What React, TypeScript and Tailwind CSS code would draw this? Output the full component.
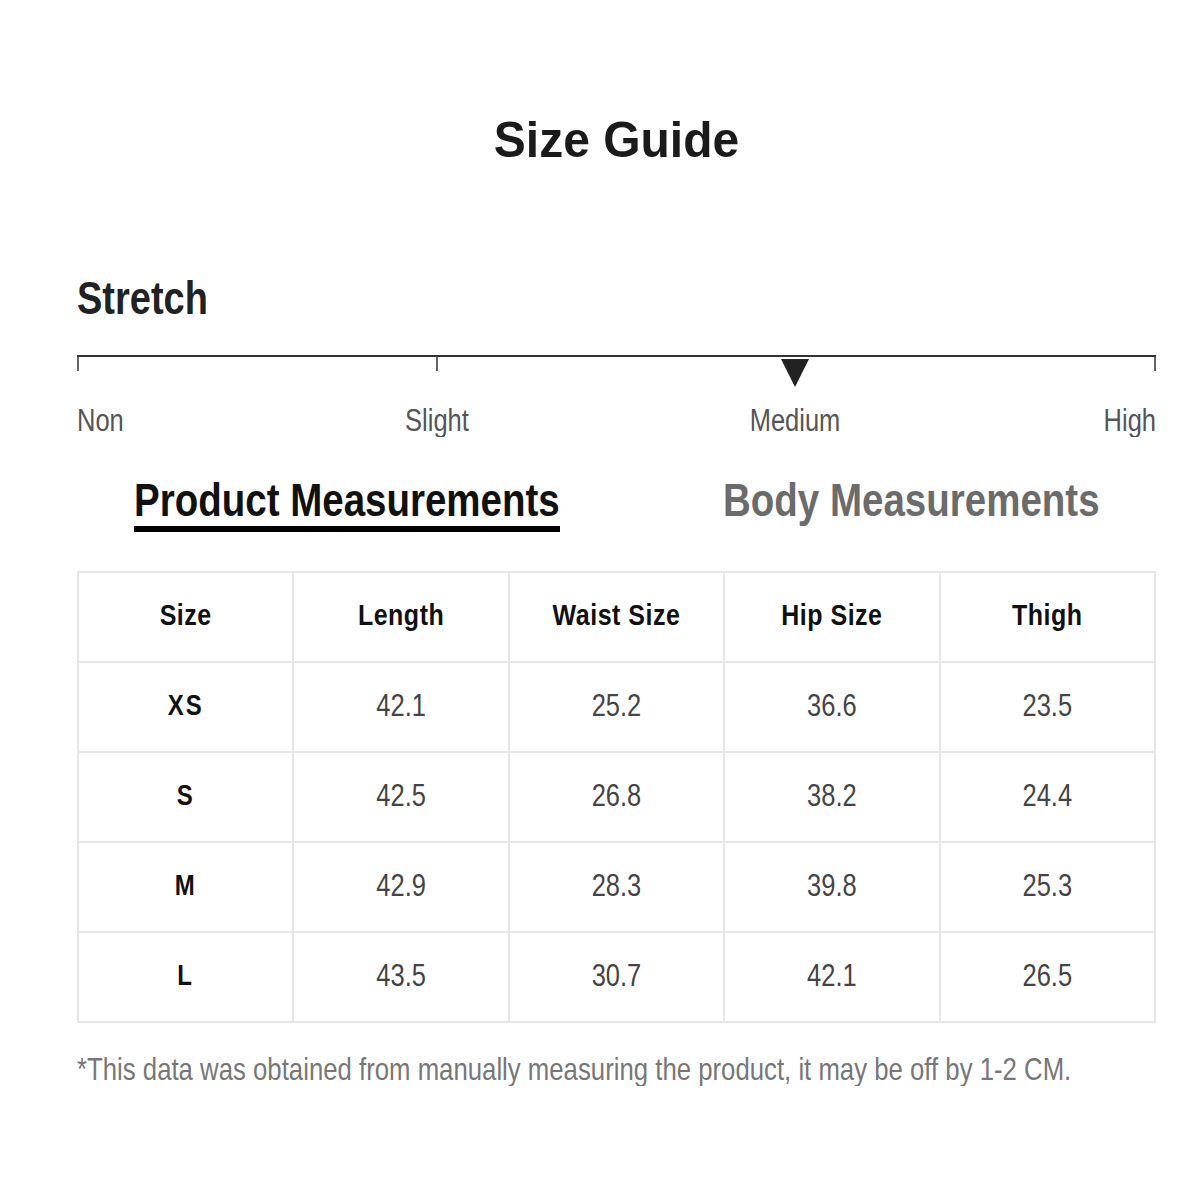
const rows = [
  ["XS", "42.1", "25.2", "36.6", "23.5"],
  ["S", "42.5", "26.8", "38.2", "24.4"],
  ["M", "42.9", "28.3", "39.8", "25.3"],
  ["L", "43.5", "30.7", "42.1", "26.5"],
];

const headers = ["Size", "Length", "Waist Size", "Hip Size", "Thigh"];

// the source text is drawn a bit taller than Arial, so stretch glyphs vertically
const tall = "inline-block scale-y-[1.2]";

function StretchScale() {
  return (
    <div className="mt-[34px]">
      <svg width="1079" height="34" viewBox="0 0 1079 34" className="block">
        <line x1="0" y1="1" x2="1079" y2="1" stroke="#333" strokeWidth="2" />
        <line x1="1" y1="2" x2="1" y2="16" stroke="#333" strokeWidth="1.5" />
        <line x1="360" y1="2" x2="360" y2="16" stroke="#333" strokeWidth="1.5" />
        <line x1="1078" y1="2" x2="1078" y2="16" stroke="#333" strokeWidth="1.5" />
        <polygon points="704,4 732,4 718,32" fill="#222" />
      </svg>
      <div className="relative h-[31px] mt-[16px] text-[25.5px] leading-[31px] text-[#555]">
        <span className={`absolute left-0 top-0 ${tall}`}>Non</span>
        <span className="absolute left-[360px] top-0 -translate-x-1/2">
          <span className={tall}>Slight</span>
        </span>
        <span className="absolute left-[718px] top-0 -translate-x-1/2">
          <span className={tall}>Medium</span>
        </span>
        <span className={`absolute right-0 top-0 ${tall}`}>High</span>
      </div>
    </div>
  );
}

export default function App() {
  return (
    <div className="min-h-[1200px] bg-white" style={{ fontFamily: '"Liberation Sans", Arial, sans-serif' }}>
      <div className="ml-[77px] w-[1079px] pt-[116px]">
        <h1 className="text-center text-[48px] leading-[48px] font-black text-[#1a1a1a]">
          <span className="inline-block scale-y-[1.05]">Size Guide</span>
        </h1>

        <h2 className="mt-[111px] text-[38px] leading-[46px] font-bold text-[#222]">
          <span className={tall}>Stretch</span>
        </h2>

        <StretchScale />

        <div className="mt-[44px] flex items-start text-[38.5px] leading-[40px] font-bold">
          <div className="ml-[57px] w-[589px]">
            <span className="inline-block border-b-[6px] border-black pb-[6px] text-[#111]">
              <span className={tall}>Product Measurements</span>
            </span>
          </div>
          <div className="text-[#6b6b6b]">
            <span className={tall}>Body Measurements</span>
          </div>
        </div>

        <table className="mt-[39px] w-[1079px] table-fixed border-collapse">
          <thead>
            <tr className="h-[90px]">
              {headers.map((h) => (
                <th
                  key={h}
                  className="border-2 border-[#e6e6e6] pb-[4px] text-center text-[25px] font-bold text-[#111] tracking-[0.5px]"
                >
                  <span className={tall}>{h}</span>
                </th>
              ))}
            </tr>
          </thead>
          <tbody>
            {rows.map((r) => (
              <tr key={r[0]} className="h-[90px]">
                {r.map((v, i) => (
                  <td
                    key={i}
                    className={
                      i === 0
                        ? "border-2 border-[#e6e6e6] pb-[4px] text-center text-[24px] font-bold text-[#111] tracking-[2px]"
                        : "border-2 border-[#e6e6e6] pb-[4px] text-center text-[25.5px] text-[#444]"
                    }
                  >
                    <span className={tall}>{v}</span>
                  </td>
                ))}
              </tr>
            ))}
          </tbody>
        </table>

        <p className="mt-[30px] text-[25.75px] leading-[32px] text-[#777]">
          <span className={tall}>
            *This data was obtained from manually measuring the product, it may be off by 1-2 CM.
          </span>
        </p>
      </div>
    </div>
  );
}
